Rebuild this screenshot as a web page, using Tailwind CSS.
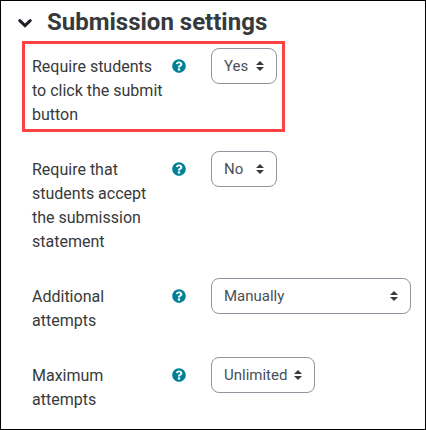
<!DOCTYPE html>
<html lang="en">
<head>
    <meta charset="UTF-8">
    <meta name="viewport" content="width=device-width, initial-scale=1.0">
    <title>Submission settings</title>
    <script src="https://cdn.jsdelivr.net/npm/@tailwindcss/browser@4"></script>
</head>
<body class="bg-white font-['Roboto',sans-serif] text-[#373a3c]">
    <!-- Shared icons -->
    <svg class="hidden">
        <symbol id="help" viewBox="0 0 512 512">
            <path fill="currentColor" d="M504 256c0 136.997-111.043 248-248 248S8 392.997 8 256C8 119.083 119.043 8 256 8s248 111.083 248 248zM262.655 90c-54.497 0-89.255 22.957-116.549 63.758-3.536 5.286-2.353 12.415 2.715 16.258l34.699 26.31c5.205 3.947 12.621 3.008 16.665-2.122 17.864-22.658 30.113-35.797 57.303-35.797 20.429 0 45.698 13.148 45.698 32.958 0 14.976-12.363 22.667-32.534 33.976C247.128 238.528 216 254.941 216 296v4c0 6.627 5.373 12 12 12h56c6.627 0 12-5.373 12-12v-1.333c0-28.462 83.186-29.647 83.186-106.667 0-58.002-60.165-102-116.531-102zM256 338c-25.365 0-46 20.635-46 46 0 25.364 20.635 46 46 46s46-20.636 46-46c0-25.365-20.635-46-46-46z"/>
        </symbol>
        <symbol id="sort" viewBox="0 0 4 5">
            <path fill="#343a40" d="M2 0L0 2h4zm0 5L0 3h4z"/>
        </symbol>
    </svg>

    <main class="min-h-screen border border-black px-[21px] pb-3">
        <h1 class="flex h-10 items-center pt-[2px] text-2xl font-bold">
            <button type="button" aria-label="Collapse Submission settings" class="-ml-2 flex w-[33px] pt-[2px] pl-1 text-[#1d2125]">
                <svg class="h-4 w-[14px]" viewBox="0 0 14 16" fill="none" stroke="currentColor" stroke-width="3" stroke-linecap="round"><path d="M1.8 5.6L7 10.6l5.2-5"/></svg>
            </button>
            <span>Submission settings</span>
        </h1>

        <form class="space-y-3">
            <!-- Highlighted setting -->
            <div class="flex w-fit items-start border-3 border-[#fc4243] pt-1 pr-[5px] pb-[2px] pl-[7px]">
                <label for="submit-button" class="w-[140px] shrink-0 pt-[7px] pr-2 text-base">Require students to click the submit button</label>
                <button type="button" aria-label="Help with the submit button" class="mt-[11px] mr-[25px] shrink-0 text-[#008196]">
                    <svg class="size-[14px]"><use href="#help"/></svg>
                </button>
                <div class="relative w-[66px]">
                    <select id="submit-button" class="block h-9 w-full appearance-none rounded-lg border border-[#8f959e] bg-white pl-3 text-[15px] text-[#495057]">
                        <option>Yes</option>
                        <option>No</option>
                    </select>
                    <svg class="pointer-events-none absolute top-[13px] right-[13px] h-[10px] w-2"><use href="#sort"/></svg>
                </div>
            </div>

            <div class="flex items-start border-3 border-transparent px-[7px] pt-1 pb-[2px]">
                <label for="statement" class="w-[140px] shrink-0 pt-[7px] pr-2 text-base">Require that students accept the submission statement</label>
                <button type="button" aria-label="Help with the submission statement" class="mt-[11px] mr-[25px] shrink-0 text-[#008196]">
                    <svg class="size-[14px]"><use href="#help"/></svg>
                </button>
                <div class="relative w-[66px]">
                    <select id="statement" class="block h-9 w-full appearance-none rounded-lg border border-[#8f959e] bg-white pl-3 text-[15px] text-[#495057]">
                        <option>No</option>
                        <option>Yes</option>
                    </select>
                    <svg class="pointer-events-none absolute top-[13px] right-[13px] h-[10px] w-2"><use href="#sort"/></svg>
                </div>
            </div>

            <div class="flex items-start border-3 border-transparent pt-1 pb-[2px] pl-[7px]">
                <label for="additional" class="w-[140px] shrink-0 pt-[7px] pr-10 text-base">Additional attempts</label>
                <button type="button" aria-label="Help with additional attempts" class="mt-[11px] mr-[25px] shrink-0 text-[#008196]">
                    <svg class="size-[14px]"><use href="#help"/></svg>
                </button>
                <div class="relative -mr-[10px] w-[200px] shrink-0">
                    <select id="additional" class="block h-9 w-full appearance-none rounded-lg border border-[#8f959e] bg-white pl-3 text-[15px] text-[#495057]">
                        <option>Manually</option>
                        <option>Never</option>
                    </select>
                    <svg class="pointer-events-none absolute top-[13px] right-[13px] h-[10px] w-2"><use href="#sort"/></svg>
                </div>
            </div>

            <div class="flex items-start border-3 border-transparent px-[7px] pt-1 pb-[2px]">
                <label for="maximum" class="w-[140px] shrink-0 pt-[7px] pr-10 text-base">Maximum attempts</label>
                <button type="button" aria-label="Help with maximum attempts" class="mt-[11px] mr-[25px] shrink-0 text-[#008196]">
                    <svg class="size-[14px]"><use href="#help"/></svg>
                </button>
                <div class="relative w-[104px]">
                    <select id="maximum" class="block h-9 w-full appearance-none rounded-lg border border-[#8f959e] bg-white pl-3 text-[15px] text-[#495057]">
                        <option>Unlimited</option>
                        <option>1</option>
                        <option>2</option>
                    </select>
                    <svg class="pointer-events-none absolute top-[13px] right-[13px] h-[10px] w-2"><use href="#sort"/></svg>
                </div>
            </div>
        </form>
    </main>
</body>
</html>
